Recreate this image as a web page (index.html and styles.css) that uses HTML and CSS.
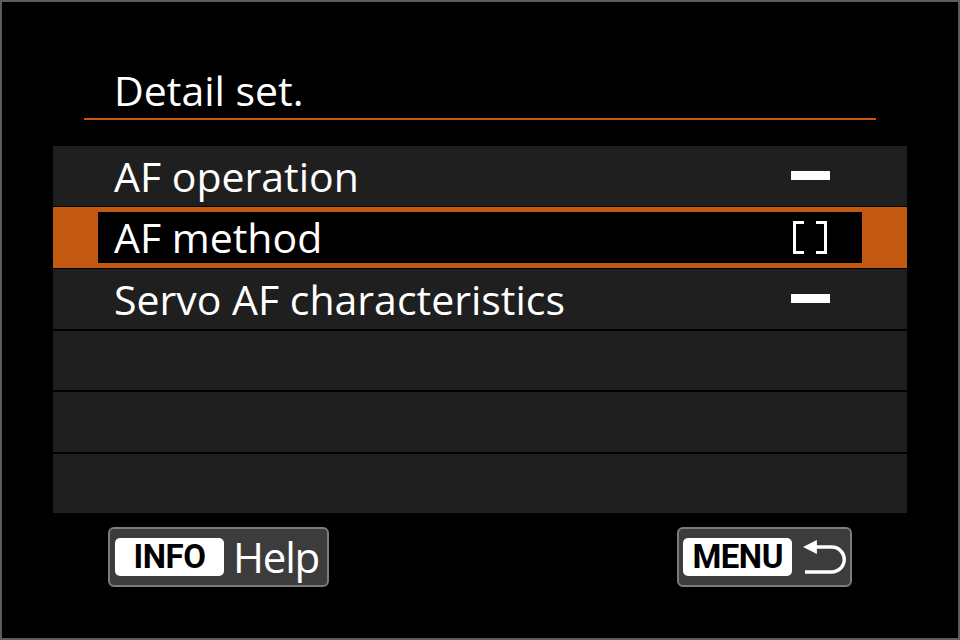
FILE: index.html
```html
<!DOCTYPE html>
<html lang="en">
<head>
  <meta charset="UTF-8">
  <title>Detail set.</title>
  <link rel="stylesheet" href="styles.css">
</head>
<body>
  <div class="screen">
    <div class="header">
      <h1>Detail set.</h1>
    </div>

    <!-- Menu rows -->
    <div class="menu-list">
      <div class="row">
        <span class="row-label">AF operation</span>
        <span class="dash"></span>
      </div>
      <div class="row selected">
        <div class="row-inner">
          <span class="row-label">AF method</span>
          <svg class="bracket" width="34" height="33" viewBox="0 0 34 33">
            <path d="M11 1.5H1.5V31.5H11M23 1.5H32.5V31.5H23" fill="none" stroke="#fff" stroke-width="3"/>
          </svg>
        </div>
      </div>
      <div class="row">
        <span class="row-label">Servo AF characteristics</span>
        <span class="dash"></span>
      </div>
      <div class="row"></div>
      <div class="row"></div>
      <div class="row"></div>
    </div>

    <!-- Bottom buttons -->
    <div class="footer">
      <div class="key-btn info-btn">
        <span class="key-label">INFO</span>
        <span class="key-text">Help</span>
      </div>
      <div class="key-btn menu-btn">
        <span class="key-label">MENU</span>
        <svg class="back-icon" width="44" height="36" viewBox="0 0 44 36">
          <path d="M1 8L15 1V15Z" fill="#fff"/>
          <path d="M13 8H30A12.5 12.5 0 0 1 30 33H3" fill="none" stroke="#fff" stroke-width="3.5"/>
        </svg>
      </div>
    </div>
  </div>
</body>
</html>
```

FILE: styles.css
```css
* {
  margin: 0;
  padding: 0;
  box-sizing: border-box;
}

body {
  background: #000;
  font-family: 'Open Sans', 'Noto Sans', sans-serif;
  color: #fff;
}

.screen {
  width: 960px;
  height: 640px;
  border: 2px solid #5c5c5c;
  background: #000;
  padding-top: 64px;
  display: flex;
  flex-direction: column;
}

.header {
  margin-left: 82px;
  width: 792px;
  padding: 0 0 4px 30px;
  border-bottom: 2px solid #c45a12;
}

.header h1 {
  font-size: 41px;
  font-weight: 400;
  line-height: 48px;
}

.menu-list {
  margin: 26px 0 0 51px;
  width: 854px;
  display: flex;
  flex-direction: column;
  gap: 2px;
}

.row {
  height: 59.5px;
  background: #1f1f1f;
  display: flex;
  align-items: center;
  padding: 0 77px 0 61px;
}

.row-label {
  font-size: 41px;
  line-height: 48px;
}

.dash {
  margin-left: auto;
  width: 39px;
  height: 9px;
  background: #fff;
}

.row.selected {
  height: 61.5px;
  margin: -1px 0;
  background: #c45a12;
  padding: 5px 45px;
}

.row-inner {
  flex: 1;
  height: 100%;
  background: #000;
  display: flex;
  align-items: center;
  padding: 0 35px 0 16px;
}

.bracket {
  margin-left: auto;
}

.footer {
  margin-top: 14px;
  display: flex;
  justify-content: space-between;
  padding: 0 106px;
}

.key-btn {
  height: 60px;
  border: 2px solid #7c7c7c;
  border-radius: 6px;
  background: #3c3c3c;
  display: flex;
  align-items: center;
  padding: 0 4px;
}

.info-btn {
  width: 221px;
  padding-left: 5px;
}

.menu-btn {
  width: 175px;
}

.key-label {
  height: 38px;
  background: #fff;
  color: #000;
  border-radius: 5px;
  font-family: Roboto, 'Open Sans', sans-serif;
  font-weight: 700;
  font-size: 33px;
  line-height: 38px;
  letter-spacing: -0.5px;
  text-align: center;
}

.info-btn .key-label {
  width: 109px;
}

.menu-btn .key-label {
  width: 110px;
}

.key-text {
  margin-left: 9px;
  font-size: 42px;
  line-height: 48px;
  letter-spacing: -1.2px;
}

.back-icon {
  margin-left: 10px;
}
```
